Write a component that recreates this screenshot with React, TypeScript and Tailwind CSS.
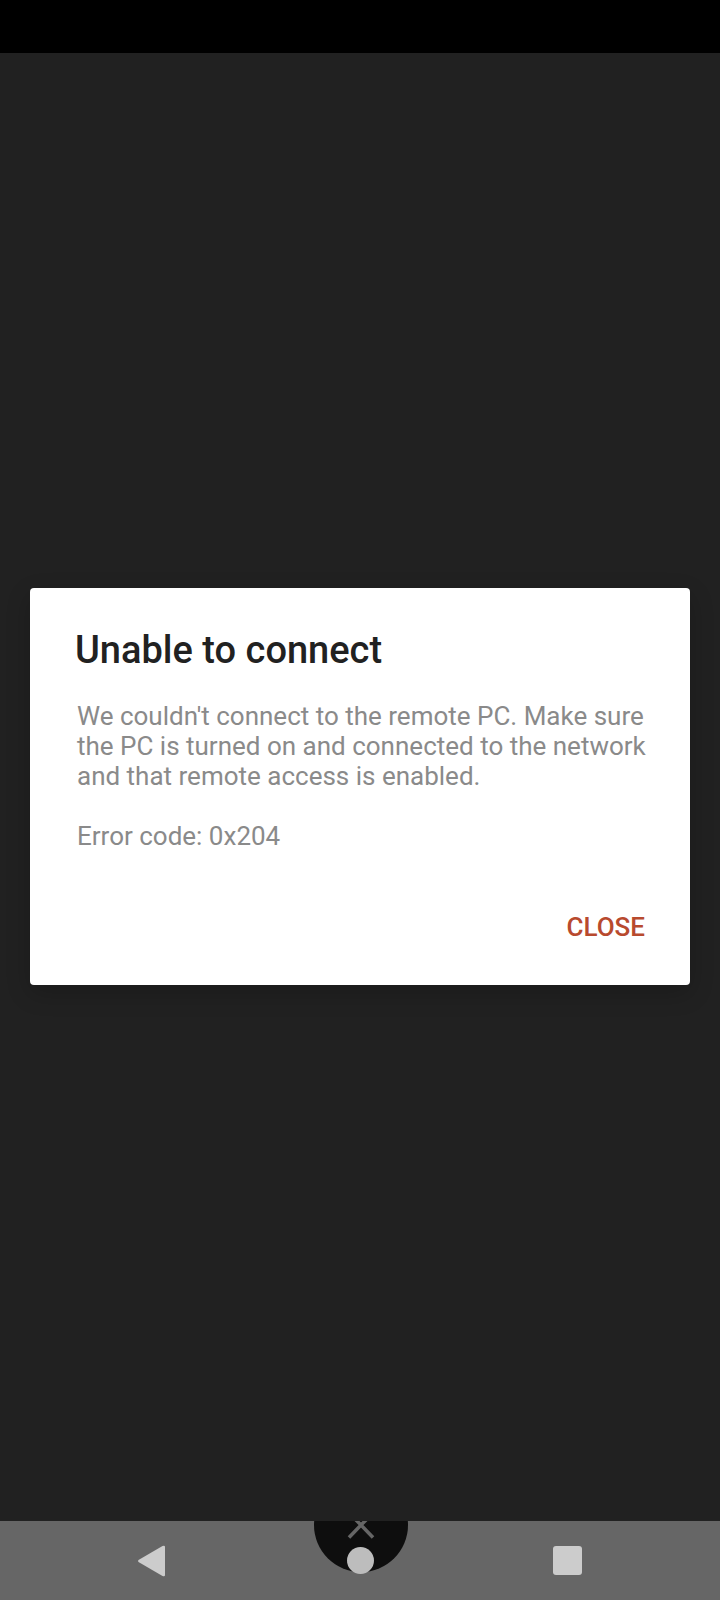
const NavBar = () => {
  return (
    <div className="relative h-[79px] shrink-0 overflow-hidden bg-[#666666]">
      {/* floating close bubble, cut off by the top of the bar */}
      <div className="absolute left-[314px] top-[-43px] h-[94px] w-[94px] rounded-full bg-[#0e0e0e]"></div>
      <svg className="absolute left-[346px] top-0" width="30" height="20" viewBox="0 0 30 20">
        <path d="M3 16.5 L15 4 L27 16.5 M15 4 L8 -3 M15 4 L22 -3" fill="none" stroke="#666666" strokeWidth="3.5" />
      </svg>
      <div className="absolute left-[347px] top-[26px] h-[27px] w-[27px] rounded-full bg-[#bdbdbd]"></div>
      <div className="flex h-full items-center justify-between pl-[137px] pr-[138px]">
        <svg width="28" height="32" viewBox="0 0 28 32">
          <path d="M25.5 1 L1.5 15 Q0.5 16 1.5 17 L25.5 31 Q28 32 28 30 L28 2 Q28 0 25.5 1 Z" fill="#cccccc" />
        </svg>
        <div className="h-[29px] w-[29px] rounded-[3px] bg-[#cccccc]"></div>
      </div>
    </div>
  );
};

const App = () => {
  return (
    <div className="flex h-[1600px] w-[720px] flex-col bg-[#212121] font-['Roboto',sans-serif]">
      <div className="h-[53px] shrink-0 bg-black"></div>
      <div className="flex flex-1 items-center px-[30px] pb-[1px]">
        <div className="flex h-[397px] w-[660px] flex-col rounded-[4px] bg-white pl-[45px] pr-[44px] shadow-[0_8px_24px_rgba(0,0,0,0.2)]">
          <div className="mt-[39px] text-[38px] leading-[46px] font-medium text-[#212121]">
            Unable to connect
          </div>
          <div className="mt-[28px] pl-[2px] text-[26px] leading-[30px] text-[#8a8a8a]">
            <p>
              We couldn't connect to the remote PC. Make sure the PC is turned on and connected to
              the network and that remote access is enabled.
            </p>
            <p className="mt-[30px]">Error code: 0x204</p>
          </div>
          <div className="mt-[61px] pr-[1px] text-right text-[26px] leading-[30px] font-medium text-[#b84a2e]">
            CLOSE
          </div>
        </div>
      </div>
      <NavBar />
    </div>
  );
};

export default App;
